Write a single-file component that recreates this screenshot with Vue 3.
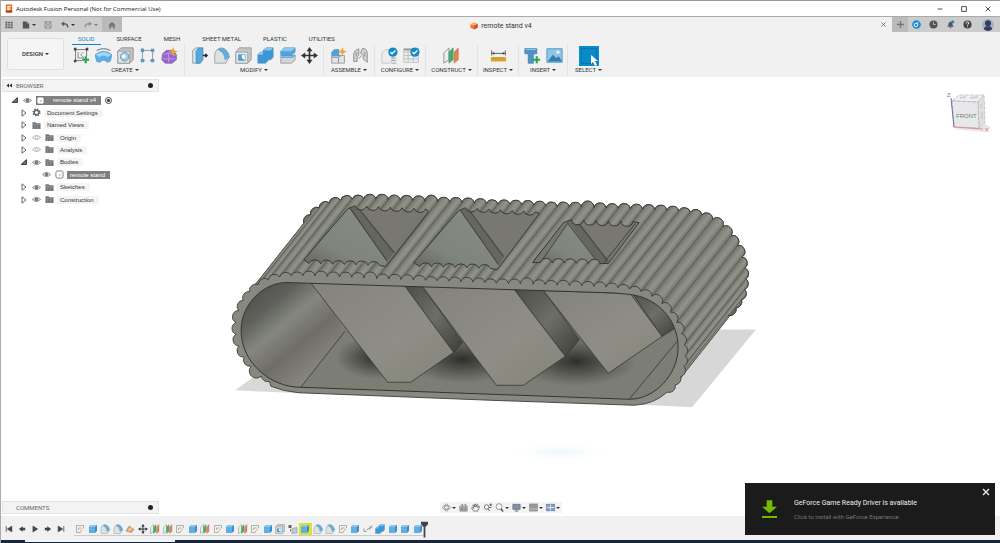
<script setup>
const tabs = ['SOLID', 'SURFACE', 'MESH', 'SHEET METAL', 'PLASTIC', 'UTILITIES']

const groups = [
  { name: 'CREATE', icons: ['sketch', 'revolve', 'hole', 'rect', 'form'] },
  { name: 'MODIFY', icons: ['presspull', 'fillet', 'shell', 'combine', 'split', 'move'] },
  { name: 'ASSEMBLE', icons: ['component', 'joint'] },
  { name: 'CONFIGURE', icons: ['config', 'table'] },
  { name: 'CONSTRUCT', icons: ['plane'] },
  { name: 'INSPECT', icons: ['measure'] },
  { name: 'INSERT', icons: ['bolt', 'image'] },
  { name: 'SELECT', icons: ['select'] }
]

const tree = [
  { label: 'remote stand v4', level: 'root', arrow: 'open', eye: 'eye', icon: 'body', selected: true, radio: true },
  { label: 'Document Settings', level: 'one', arrow: 'closed', icon: 'gear' },
  { label: 'Named Views', level: 'one', arrow: 'closed', icon: 'folder' },
  { label: 'Origin', level: 'one', arrow: 'closed', eye: 'eyeoff', icon: 'folder' },
  { label: 'Analysis', level: 'one', arrow: 'closed', eye: 'eyeoff', icon: 'folder' },
  { label: 'Bodies', level: 'one', arrow: 'open', eye: 'eye', icon: 'folder' },
  { label: 'remote stand', level: 'two', eye: 'eye', icon: 'body', selected: true },
  { label: 'Sketches', level: 'one', arrow: 'closed', eye: 'eye', icon: 'folder' },
  { label: 'Construction', level: 'one', arrow: 'closed', eye: 'eye', icon: 'folder' }
]

const playback = ['first', 'back', 'play', 'forward', 'last']

const features = [
  'tsketch', 'box', 'fillet', 'fillet', 'loft', 'move', 'plane', 'plane', 'tsketch', 'box',
  'plane', 'tsketch', 'box', 'plane', 'tsketch', 'box', 'shell', 'pattern', 'box', 'fillet',
  'fillet', 'tsketch', 'box', 'path', 'combine', 'box', 'box', 'box'
]
const activeFeature = 18

const navTools = [
  { icon: 'orbit', menu: true },
  { icon: 'look' },
  { icon: 'hand' },
  { icon: 'zoomfit' },
  { icon: 'zoom', menu: true },
  { icon: 'display', menu: true },
  { icon: 'grid', menu: true },
  { icon: 'views', menu: true }
]

// Crests of the ribs on the front face, clockwise from the lower left.
const crests = [
  [272, 386], [263, 384], [252, 373], [243, 364], [236.5, 353], [232, 341], [230, 328], [232, 315],
  [235.5, 303], [241.5, 292.5], [250, 284], [260, 277.3], [272, 273.3], [284.3, 271.6],
  [296, 271], [308, 271], [320.5, 271.6], [332.6, 272.2], [345, 272.7], [357, 273],
  [370, 274], [382, 274.3], [394.5, 274.7], [406.6, 275.3], [419, 275.7], [431, 276],
  [442.6, 276.6], [454.5, 276.7], [466.6, 277.3], [478.5, 277.7], [490.5, 278.3], [502, 279],
  [514, 279], [526.6, 279.7], [539, 280], [551, 280.3], [563.3, 281], [575.3, 281.3],
  [587.6, 281.6], [600, 282.3], [612, 283], [624, 283.6], [636, 285.3], [648, 289],
  [659.3, 295.6], [669.3, 304.3], [677.3, 314.3], [683, 326], [687, 338], [689, 349.5],
  [689, 361], [686.5, 372.5], [682, 383], [674, 391.5], [665, 398.5]
]
const depth = [61, -77]

const cusps = crests.slice(1).map((p, i) => {
  const q = crests[i]
  const mx = (p[0] + q[0]) / 2
  const my = (p[1] + q[1]) / 2
  const dx = p[0] - q[0]
  const dy = p[1] - q[1]
  const len = Math.hypot(dx, dy)
  return [mx - (dy / len) * 4, my + (dx / len) * 4]
})

const pt = p => p[0].toFixed(1) + ' ' + p[1].toFixed(1)
const shift = p => [p[0] + depth[0], p[1] + depth[1]]

const ribs = cusps.slice(1).map((b, i) => {
  const a = cusps[i]
  const n = [depth[1], -depth[0]]
  const k = ((b[0] - a[0]) * n[0] + (b[1] - a[1]) * n[1]) / (n[0] ** 2 + n[1] ** 2)
  return {
    id: 'rib' + i,
    a,
    g: [a[0] + n[0] * k, a[1] + n[1] * k],
    body: `M${pt(a)} L${pt(shift(a))} A6.3 6.3 0 0 1 ${pt(shift(b))} L${pt(b)}Z`,
    cap: `M${pt(shift(a))} A6.3 6.3 0 0 1 ${pt(shift(b))}`
  }
}).slice(8)

const face =
  'M' + pt(cusps[0]) +
  cusps.slice(1).map(c => ` A6.3 6.3 0 0 1 ${pt(c)}`).join('') +
  ' Q654 404 634 405 L490 400 L298 392.500 Q282 391 270 386Z'

// Row of equal arcs between two points.
function arcs(x1, y1, x2, y2, n, sweep) {
  let d = ''
  for (let i = 1; i <= n; i++) {
    d += ` A6.4 6.4 0 0 ${sweep} ${(x1 + ((x2 - x1) * i) / n).toFixed(1)} ${(y1 + ((y2 - y1) * i) / n).toFixed(1)}`
  }
  return d
}

const pockets = [
  {
    outline: `M303 259 L347 208 L354 205${arcs(354, 205, 425, 208, 6, 0)} L428 211 L385 266 L379 265${arcs(379, 265, 308, 263, 6, 0)}Z`,
    left: 'M303 259 L348 207 L386 261 L384 265 L308 263Z',
    bar: 'M348 207 L357 206 L394 251 L386 261Z',
    right: 'M357 206 L428 209 L394 251Z',
    line: 'M349 207 L386 260 M358 208 L393 252'
  },
  {
    outline: `M413 262 L458 210 L465 207${arcs(465, 207, 535, 211, 6, 0)} L539 213 L497 269 L490 268${arcs(490, 268, 419, 266, 6, 0)}Z`,
    left: 'M413 262 L459 209 L499 264 L494 269 L419 266Z',
    bar: 'M459 209 L468 208 L504 256 L498 265Z',
    right: 'M468 208 L540 211 L504 256Z',
    line: 'M460 210 L498 264 M469 210 L503 256'
  },
  {
    outline: `M532 262 L563 222 L571 219${arcs(571, 219, 633, 221, 5, 0)} L639 222 L608 263 L600 263${arcs(600, 263, 540, 262, 5, 0)}Z`,
    left: 'M539 262 L567 223 L600 264Z',
    bar: 'M567 219 L577 219 L610 262 L599 264Z',
    right: 'M577 219 L637 222 L606 258Z',
    line: 'M532 262 L563 221 M540 262 L568 222 M567 222 L599 264 M577 221 L607 260 M603 263 L635 223'
  }
]
</script>

<template>
  <div class="app">
    <svg class="sprite" aria-hidden="true">
      <symbol id="i-sketch" viewBox="0 0 20 20"><path d="M2 3H16M3 2V17M2 16H11M16 2V11" fill="none" stroke="#666" /><path d="M6 6V13H13L9 9L12 6" fill="none" stroke="#777" /><g fill="#444"><path d="M1 1h3v3H1zM15 1h3v3h-3zM1 15h3v3H1z" /></g><path d="M15 11v8M11 15h8" stroke="#28a34a" stroke-width="2.500" /></symbol>
      <symbol id="i-revolve" viewBox="0 0 20 20"><path d="M0 9Q10 1 20 9L18 17L14 18Q10 13 6 18L2 17Z" fill="#5aaee6" stroke="#5593bd" stroke-width=".7" /><path d="M1 9Q10 3 19 9L15 12Q10 8 5 12Z" fill="#a4d4f4" /><path d="M2 4Q10 0 18 4" fill="none" stroke="#555" /></symbol>
      <symbol id="i-hole" viewBox="0 0 20 20"><path d="M1 5L5 1H19V15L15 19H1Z" fill="#c2c5c7" stroke="#888" /><path d="M1 5H15V19H1Z" fill="#e5e6e7" stroke="#999" /><circle cx="9" cy="11.500" r="5" fill="#a0cce8" stroke="#5a8cab" /><circle cx="8" cy="11" r="2.500" fill="#eef7fc" /></symbol>
      <symbol id="i-rect" viewBox="0 0 20 20"><path d="M4 4H16V16H4ZM4 1V4" fill="none" stroke="#888" /><g fill="#5b98c6"><path d="M2 2h4v4H2zM14 2h4v4h-4zM14 14h4v4h-4zM2 14h4v4H2z" /></g><path d="M7 16h6" stroke="#f1f1f1" stroke-width="2" /></symbol>
      <symbol id="i-form" viewBox="0 0 20 20"><path d="M2 8L6 4H14L18 9V15L13 19H5L1 15Z" fill="#9766c8" stroke="#8760b3" /><path d="M3 9L9 7L9 18M9 7L17 10M2 14L17 14" fill="none" stroke="#c6a1e9" /><path d="M14 0L16 4L20 5L16 7L15 11L13 7L9 5L13 4Z" fill="#efa72b" /></symbol>
      <symbol id="i-presspull" viewBox="0 0 20 20"><path d="M2 4L6 1H9V19H2Z" fill="#d9e4ec" stroke="#8397a5" /><path d="M6 5L9 1H14V15L11 19H6Z" fill="#55a7df" stroke="#4b8bb5" /><path d="M14 10H19M17 8L19 10L17 12" fill="none" stroke="#222" stroke-width="1.500" /></symbol>
      <symbol id="i-fillet" viewBox="0 0 20 20"><path d="M2 19V9Q3 2 10 1Q18 3 19 12L15 19Z" fill="#dfe1e2" stroke="#989b9c" /><path d="M6 3Q12 -1 16 5Q19 8 19 12L14 15Q14 7 6 3" fill="#61aee0" stroke="#5a9ac5" stroke-width=".7" /></symbol>
      <symbol id="i-shell" viewBox="0 0 20 20"><path d="M1 6L5 1H19V15L15 19H1Z" fill="#c4c7c9" stroke="#939698" /><path d="M1 6H15V19H1Z" fill="#e9eaea" stroke="#999" /><path d="M4 9H12V16H4Z" fill="#fff" stroke="#76a7c6" /><path d="M4 9H8V13L12 16H4Z" fill="#4e9fd5" /></symbol>
      <symbol id="i-combine" viewBox="0 0 20 20"><path d="M7 4L11 1H19V12L16 15H13V16L10 19H1V9L4 6H7Z" fill="#3e96d6" stroke="#4288b9" stroke-width=".7" /><path d="M7 4L11 1H19L16 4ZM1 9L4 6H7V9Z" fill="#86c5ef" /></symbol>
      <symbol id="i-split" viewBox="0 0 20 20"><path d="M2 14L6 10H19V15L15 19H2Z" fill="#d3d6d8" stroke="#989b9c" /><path d="M2 5L6 1H19V6L15 10H2Z" fill="#4fa3dd" stroke="#4b8fbb" stroke-width=".7" /><path d="M2 5L6 1H19L15 5Z" fill="#8ac8ef" /><path d="M1 12H16L19 9" fill="none" stroke="#4b9fd8" stroke-width="1.500" /></symbol>
      <symbol id="i-move" viewBox="0 0 20 20"><path d="M10 3V17M3 10H17" stroke="#333" stroke-width="2" /><path d="M10 0L13.500 5H6.500ZM10 20L13.500 15H6.500ZM0 10L5 6.500V13.500ZM20 10L15 6.500V13.500Z" fill="#333" /></symbol>
      <symbol id="i-component" viewBox="0 0 20 20"><path d="M2 6L5 3H10V10H17V19H2Z" fill="#e0e2e4" stroke="#939698" /><path d="M2 6L5 3H11V11H2Z" fill="#559fd5" /><path d="M2 12H10V19M10 12L13 10" fill="none" stroke="#81878b" /><path d="M15 0L16 4L20 5L16 7L15 10L13 7L10 5L13 4Z" fill="#efa72b" /></symbol>
      <symbol id="i-joint" viewBox="0 0 20 20"><path d="M2 17V8Q3 3 8 2V10L6 12V17ZM12 2Q17 1 18 7V18L13 14V10L10 7Z" fill="#cfd1d2" stroke="#888" /><path d="M5 6v5M15 6v5M8 14L11 10" stroke="#888" /></symbol>
      <symbol id="i-config" viewBox="0 0 20 20"><path d="M1 19V7L6 3H14V15L10 19Z" fill="#ececec" stroke="#c4c4c4" /><path d="M12 13h6M12 16h6M12 19h6" stroke="#999" /><circle cx="14" cy="6" r="5.500" fill="#138ac5" /><path d="M11 6L13 8L17 4" stroke="#fff" stroke-width="1.500" fill="none" /></symbol>
      <symbol id="i-table" viewBox="0 0 20 20"><path d="M1 2H18V18H1ZM1 6H18M1 10H18M1 14H18M6 2V18M12 2V18" fill="#eee" stroke="#bbb" /><path d="M1 3H10" stroke="#999" stroke-width="2" /><circle cx="14" cy="6" r="5.500" fill="#138ac5" /><path d="M11 6L13 8L17 4" stroke="#fff" stroke-width="1.500" fill="none" /></symbol>
      <symbol id="i-plane" viewBox="0 0 20 20"><path d="M1 7L7 1V15L1 19Z" fill="#ececec" stroke="#888" /><path d="M7 6L12 1V15L7 19Z" fill="#48aa70" stroke="#4a9c6d" stroke-width=".7" /><path d="M13 6L18 1V15L13 19Z" fill="#de8256" stroke="#c97b57" stroke-width=".7" /></symbol>
      <symbol id="i-measure" viewBox="0 0 20 20"><path d="M2 4V10M18 4V10M3 7.500H17" stroke="#444" /><path d="M2 7.500L5 6V9ZM18 7.500L15 6V9Z" fill="#444" /><path d="M1 12H19V17H1Z" fill="#d9a528" /><path d="M4 12v2M7 12v2M10 12v2M13 12v2M16 12v2" stroke="#a98628" /></symbol>
      <symbol id="i-bolt" viewBox="0 0 20 20"><path d="M1 2H15V8H11V19H5V8H1Z" fill="#4c92c7" stroke="#4a83ae" /><path d="M2 3H14" stroke="#9bccea" /><path d="M15 11v8M11 15h8" stroke="#28a34a" stroke-width="2.500" /></symbol>
      <symbol id="i-image" viewBox="0 0 20 20"><path d="M1 2H19V18H1Z" fill="#8ec6ea" stroke="#5393be" /><path d="M2 17L8 9L12 13L15 11L19 17Z" fill="#347db2" /><circle cx="14" cy="6" r="2" fill="#e7f5fc" /></symbol>
      <symbol id="i-select" viewBox="0 0 20 20"><path d="M0 0H20V20H0Z" fill="#078bcb" /><path d="M2.500 2.500H17.500V17.500H2.500Z" fill="none" stroke="#14567d" stroke-dasharray="2 1" stroke-width=".7" /><path d="M12 9V18L14 16L16 20L18 19L16 15H19Z" fill="#fff" /></symbol>
      <symbol id="i-box" viewBox="0 0 20 20"><path d="M2 6L6 2H18V14L14 18H2Z" fill="#3d8dcc" /><path d="M2 6L6 2H18L14 6Z" fill="#8bc6ef" /><path d="M2 6H14V18H2Z" fill="#61aee2" /></symbol>
      <symbol id="i-tsketch" viewBox="0 0 20 20"><path d="M3 3H17M3 3V17H11M7 12V8H13M17 3V8" fill="none" stroke="#999" stroke-width="1.500" /><path d="M10 16L16 9" stroke="#e0ad79" stroke-width="2" /></symbol>
      <symbol id="i-loft" viewBox="0 0 20 20"><path d="M2 14L8 4L18 11L13 17Z" fill="#dfa868" stroke="#9d7b51" /><path d="M7 13L13 8" stroke="#fff" stroke-width="2" /></symbol>
      <symbol id="i-pattern" viewBox="0 0 20 20"><path d="M1 2h6v6H1z" fill="#666" /><path d="M8 9L18 7V18L8 19Z" fill="#b9cbd7" stroke="#728592" /><path d="M5 10v5" stroke="#bd6553" stroke-width="2" /></symbol>
      <symbol id="i-path" viewBox="0 0 20 20"><path d="M2 9V15H7M7 12L17 6M14 5V11" fill="none" stroke="#999" stroke-width="2" /><circle cx="17" cy="5" r="2" fill="#aaa" /></symbol>
      <symbol id="i-eye" viewBox="0 0 20 20"><path d="M1 10Q10 1 19 10Q10 19 1 10Z" fill="#eee" stroke="#777" stroke-width="1.800" /><circle cx="10" cy="10" r="4" fill="#777" /></symbol>
      <symbol id="i-eyeoff" viewBox="0 0 20 20"><path d="M1 10Q10 1 19 10Q10 19 1 10Z" fill="#fafafa" stroke="#999" stroke-width="1.500" /><circle cx="10" cy="10" r="3" fill="none" stroke="#999" /></symbol>
      <symbol id="i-folder" viewBox="0 0 20 20"><path d="M1 3H8L10 5H19V18H1Z" fill="#777" /><path d="M1 8H19M6 9V18M12 9V18" stroke="#aaa" /></symbol>
      <symbol id="i-gear" viewBox="0 0 20 20"><circle cx="10" cy="10" r="7" fill="none" stroke="#666" stroke-width="4" stroke-dasharray="3 2.500" /><circle cx="10" cy="10" r="5" fill="none" stroke="#666" stroke-width="3" /></symbol>
      <symbol id="i-body" viewBox="0 0 20 20"><rect x="2" y="2" width="16" height="16" rx="4" fill="#fff" stroke="#666" stroke-width="1.800" /><circle cx="11" cy="11" r="2" fill="#bbb" /></symbol>
      <symbol id="i-open" viewBox="0 0 20 20"><path d="M3 16L16 4V16Z" fill="#777" stroke="#333" stroke-width="2.500" /></symbol>
      <symbol id="i-closed" viewBox="0 0 20 20"><path d="M5 2L15 10L5 18Z" fill="#fff" stroke="#444" stroke-width="2" /></symbol>
      <symbol id="i-first" viewBox="0 0 20 20"><path d="M3 3V17M17 3L6 10L17 17Z" fill="#444" stroke="#444" stroke-width="2" /></symbol>
      <symbol id="i-back" viewBox="0 0 20 20"><path d="M12 3L2 10L12 17ZM12 7H18V13H12Z" fill="#444" /></symbol>
      <symbol id="i-play" viewBox="0 0 20 20"><path d="M4 1L18 10L4 19Z" fill="#444" /></symbol>
      <symbol id="i-forward" viewBox="0 0 20 20"><path d="M8 3L18 10L8 17ZM2 7H8V13H2Z" fill="#444" /></symbol>
      <symbol id="i-last" viewBox="0 0 20 20"><path d="M17 3V17M3 3L14 10L3 17Z" fill="#444" stroke="#444" stroke-width="2" /></symbol>
      <symbol id="i-orbit" viewBox="0 0 20 20"><ellipse cx="10" cy="10" rx="9" ry="4" fill="none" stroke="#777" stroke-width="1.500" /><ellipse cx="10" cy="10" rx="4" ry="8" fill="none" stroke="#777" stroke-width="1.500" /></symbol>
      <symbol id="i-look" viewBox="0 0 20 20"><path d="M2 7H18V18H2ZM5 3H8V7M12 3H15V7" fill="#ccc" stroke="#666" stroke-width="1.500" /><path d="M5 11H15V15H5Z" fill="none" stroke="#555" stroke-width="1.500" /></symbol>
      <symbol id="i-hand" viewBox="0 0 20 20"><path d="M6 18L1 11Q2 8 6 12L4 5L6 4L8 9V3L10 2L11 9L13 3L15 4V10L17 7L19 8L15 18Z" fill="#eee" stroke="#555" stroke-width="1.500" /></symbol>
      <symbol id="i-zoomfit" viewBox="0 0 20 20"><circle cx="8" cy="9" r="5" fill="#fff" stroke="#666" stroke-width="2" /><path d="M11 13L15 18M14 4H20M17 1V7M14 10H19" stroke="#555" stroke-width="2" /></symbol>
      <symbol id="i-zoom" viewBox="0 0 20 20"><circle cx="9" cy="8" r="6.500" fill="#fff" stroke="#666" stroke-width="1.500" /><path d="M13 13L18 19" stroke="#444" stroke-width="3" /></symbol>
      <symbol id="i-display" viewBox="0 0 20 20"><path d="M2 3H18V14H2Z" fill="#7c91b8" stroke="#777" stroke-width="2" /><path d="M6 18H14M10 14V18" stroke="#777" stroke-width="2" /></symbol>
      <symbol id="i-grid" viewBox="0 0 20 20"><path d="M1 2H19V18H1Z" fill="#999" stroke="#777" /><path d="M1 12H19M1 15H19" stroke="#ccc" /></symbol>
      <symbol id="i-views" viewBox="0 0 20 20"><path d="M1 3H19V17H1Z" fill="#8aa0cc" stroke="#536a99" stroke-width="1.500" /><path d="M10 3V17M1 10H19" stroke="#fff" stroke-width="1.500" /></symbol>
    </svg>

    <header class="titlebar">
      <svg class="logo" viewBox="0 0 20 20"><rect x="2" width="16" height="20" rx="2" fill="#e86c1d" /><path d="M6 4H15V7H9V10H14V13H9V17H6Z" fill="#fff" /><path d="M2 15H18V20H2Z" fill="#a83d0d" /></svg>
      <h1>Autodesk Fusion Personal (Not for Commercial Use)</h1>
      <div class="window-buttons">
        <button aria-label="Minimize"><svg viewBox="0 0 10 10"><path d="M2 5H8" stroke="#222" /></svg></button>
        <button aria-label="Maximize"><svg viewBox="0 0 10 10"><path d="M2 2H8V8H2Z" fill="none" stroke="#222" /></svg></button>
        <button aria-label="Close"><svg viewBox="0 0 10 10"><path d="M2 2L8 8M8 2L2 8" stroke="#222" /></svg></button>
      </div>
    </header>

    <nav class="tabbar">
      <div class="quick">
        <button aria-label="Data panel"><svg viewBox="0 0 20 20"><path d="M1 2h5v4H1zM8 2h4v4H8zM14 2h5v4h-5zM1 8h5v4H1zM8 8h4v4H8zM14 8h5v4h-5zM1 14h5v4H1zM8 14h4v4H8zM14 14h5v4h-5z" fill="#555" /></svg></button>
        <button class="wide" aria-label="File"><svg viewBox="0 0 20 20"><path d="M2 1H12L18 6V19H2Z" fill="#555" /><path d="M12 1V6H18" fill="#aaa" /></svg><i class="caret" /></button>
        <button aria-label="Save"><svg viewBox="0 0 20 20"><path d="M2 2H18V18H2ZM6 2V8H14V2M5 18V12H15V18" fill="none" stroke="#888" stroke-width="2" /></svg></button>
        <button class="wide" aria-label="Undo"><svg viewBox="0 0 20 20"><path d="M5 7H11Q17 8 17 16" fill="none" stroke="#555" stroke-width="3" /><path d="M0 7L8 1V13Z" fill="#555" /></svg><i class="caret" /></button>
        <button class="wide faded" aria-label="Redo"><svg viewBox="0 0 20 20"><path d="M15 7H9Q3 8 3 16" fill="none" stroke="#555" stroke-width="3" /><path d="M20 7L12 1V13Z" fill="#555" /></svg><i class="caret" /></button>
        <button class="home" aria-label="Home"><svg viewBox="0 0 20 20"><path d="M1 10L10 2L19 10L17 12V19H12V13H8V19H3V12Z" fill="#777" /></svg></button>
      </div>
      <div class="document">
        <svg viewBox="0 0 20 20"><path d="M1 6L9 1L19 5V14L11 19L1 15Z" fill="#ef7c35" /><path d="M1 6L9 1L19 5L11 9Z" fill="#ffb17b" /><path d="M11 9L19 5V14L11 19Z" fill="#ca5319" /></svg>
        <span>remote stand v4</span>
      </div>
      <button class="close-tab" aria-label="Close document"><svg viewBox="0 0 10 10"><path d="M2 2L8 8M8 2L2 8" stroke="#555" /></svg></button>
      <div class="account">
        <button class="add" aria-label="New design"><svg viewBox="0 0 20 20"><path d="M10 2V18M2 10H18" stroke="#777" stroke-width="3" /></svg></button>
        <button aria-label="Extensions"><svg viewBox="0 0 20 20"><circle cx="10" cy="10" r="9.500" fill="#168dcc" /><circle cx="9" cy="11" r="4" fill="none" stroke="#fff" stroke-width="2" /><path d="M10 9L15 4" stroke="#fff" stroke-width="2" /></svg></button>
        <button aria-label="Job status"><svg viewBox="0 0 20 20"><circle cx="10" cy="10" r="9" fill="#555" /><path d="M10 4V10H15" fill="none" stroke="#bbb" stroke-width="2" /></svg></button>
        <button aria-label="Notifications"><svg viewBox="0 0 20 20"><path d="M3 15Q6 12 6 7Q10 0 14 7Q14 12 17 15ZM7 16H13L10 19Z" fill="#555" /><circle cx="15" cy="4" r="3.500" fill="#168dcc" /></svg></button>
        <button aria-label="Help"><svg viewBox="0 0 20 20"><circle cx="10" cy="10" r="9" fill="#444" /><path d="M7 8Q7 4 10 4Q15 5 12 9Q10 10 10 12M10 14V16" fill="none" stroke="#fff" stroke-width="2" /></svg></button>
        <button class="avatar" aria-label="Profile"><svg viewBox="0 0 20 20"><circle cx="10" cy="10" r="10" fill="#a7b0c8" /><circle cx="10" cy="7" r="5" fill="#333d5c" /><path d="M3 17Q4 12 8 12H12Q16 12 17 17Q10 23 3 17" fill="#333d5c" /></svg></button>
      </div>
    </nav>

    <section class="ribbon">
      <button class="workspace">DESIGN<i class="caret" /></button>
      <div class="ribbon-body">
        <div class="tabs">
          <button v-for="(t, i) in tabs" :key="t" :class="{ active: i === 0 }">{{ t }}</button>
        </div>
        <div class="groups">
          <div v-for="g in groups" :key="g.name" class="group">
            <div class="tools">
              <button v-for="ic in g.icons" :key="ic" :aria-label="ic"><svg><use :href="'#i-' + ic" /></svg></button>
            </div>
            <button class="group-name">{{ g.name }}<i class="caret" /></button>
          </div>
        </div>
      </div>
    </section>

    <main class="stage">
      <svg class="model" viewBox="0 76 1000 440" role="img" aria-label="remote stand">
        <defs>
          <linearGradient v-for="r in ribs" :id="r.id" :key="r.id" gradientUnits="userSpaceOnUse" :x1="r.a[0]" :y1="r.a[1]" :x2="r.g[0]" :y2="r.g[1]">
            <stop offset="0" stop-color="#6f7069" />
            <stop offset=".3" stop-color="#85867e" />
            <stop offset=".6" stop-color="#92938b" />
            <stop offset="1" stop-color="#74756d" />
          </linearGradient>
          <linearGradient id="bore" gradientUnits="userSpaceOnUse" x1="252" y1="295" x2="318" y2="375">
            <stop offset="0" stop-color="#53544f" /><stop offset=".18" stop-color="#5f605b" /><stop offset=".4" stop-color="#848780" /><stop offset=".65" stop-color="#706d66" /><stop offset="1" stop-color="#8a8a82" />
          </linearGradient>
          <linearGradient id="slab" x1="0" y1="0" x2="1" y2="1"><stop offset="0" stop-color="#83837b" /><stop offset=".6" stop-color="#8f8e86" /><stop offset="1" stop-color="#82837a" /></linearGradient>
          <linearGradient id="side" x1="0" y1="0" x2="1" y2="1"><stop offset="0" stop-color="#4a4b46" /><stop offset=".5" stop-color="#6d6e67" /><stop offset="1" stop-color="#3c3d38" /></linearGradient>
          <linearGradient id="pocket" x1="0" y1="1" x2=".8" y2="0"><stop offset="0" stop-color="#62655f" /><stop offset=".35" stop-color="#7f847d" /><stop offset="1" stop-color="#868b84" /></linearGradient>
          <radialGradient id="dark"><stop offset="0" stop-color="#252622" stop-opacity=".9" /><stop offset="1" stop-color="#30312d" stop-opacity="0" /></radialGradient>
          <radialGradient id="haze"><stop offset="0" stop-color="#e4eff5" stop-opacity=".6" /><stop offset="1" stop-color="#eef6fa" stop-opacity="0" /></radialGradient>
          <clipPath id="opening"><path d="M286 282 C262 282 240 304 240 330 C240 361 268 387 300 387 L629 399 C655 399 678 374 678 347 C678 318 656 297 630 294 Q615 292 600 292Z" /></clipPath>
        </defs>
        <ellipse cx="560" cy="452" rx="48" ry="8" fill="url(#haze)" />
        <path d="M234 390L256 374L300 393Z" fill="#d9d9d8" />
        <path d="M690 329H756L692 407L630 404Z" fill="#d7d7d8" />
        <g stroke="#54554e" stroke-width=".7">
          <path v-for="r in ribs" :key="r.id" :d="r.body" :fill="`url(#${r.id})`" />
        </g>
        <path v-for="r in ribs" :key="r.id" :d="r.cap" fill="none" stroke="#383933" stroke-width=".9" />
        <g v-for="(p, i) in pockets" :key="i" stroke-linejoin="round">
          <path :d="p.outline" fill="#74766f" />
          <clipPath :id="'pocket' + i"><path :d="p.outline" /></clipPath>
          <g :clip-path="`url(#pocket${i})`">
            <path :d="p.right" fill="#787770" />
            <path :d="p.left" fill="url(#pocket)" />
            <path :d="p.bar" fill="#65665f" />
            <path :d="p.line" fill="none" stroke="#343530" stroke-width=".8" />
          </g>
          <path :d="p.outline" fill="none" stroke="#30312d" stroke-width=".9" />
        </g>
        <path :d="face" fill="#878880" stroke="#3b3c37" stroke-width=".9" stroke-linejoin="round" />
        <g clip-path="url(#opening)">
          <path d="M230 270H700V410H230Z" fill="#7c7d75" />
          <path d="M230 270H308L344 331L299 388H230Z" fill="url(#bore)" />
          <ellipse cx="375" cy="357" rx="40" ry="22" fill="url(#dark)" />
          <ellipse cx="462" cy="359" rx="58" ry="24" fill="url(#dark)" />
          <ellipse cx="576" cy="361" rx="60" ry="25" fill="url(#dark)" />
          <g stroke="#363732" stroke-width=".8" stroke-linejoin="round">
            <path d="M344 331L299 388" />
            <path d="M403 284L421 285L462 342L453 352Z" fill="url(#side)" />
            <path d="M308 280L403 284L453 352L410 382H387Z" fill="url(#slab)" />
            <path d="M513 288L543 290L579 339L565 356Z" fill="url(#side)" />
            <path d="M421 285L513 288L565 356L523 385H496Z" fill="url(#slab)" />
            <path d="M630 290L680 300L678 326L662 336Z" fill="url(#side)" />
            <path d="M543 290L630 293L662 336L608 373Z" fill="url(#slab)" />
            <path d="M629 399L677 341" fill="none" />
          </g>
        </g>
        <path d="M286 282 C262 282 240 304 240 330 C240 361 268 387 300 387 L629 399 C655 399 678 374 678 347 C678 318 656 297 630 294 Q615 292 600 292Z" fill="none" stroke="#343530" />
      </svg>

      <aside class="side">
        <div class="panel-head"><svg class="rewind" viewBox="0 0 12 10"><path d="M6 1L1 5L6 9ZM12 1L7 5L12 9Z" fill="#222" /></svg><span>BROWSER</span><button aria-label="Collapse browser"><i /></button></div>
        <ul class="tree">
          <li v-for="row in tree" :key="row.label" :class="[row.level, { selected: row.selected }]">
            <svg v-if="row.arrow" class="arrow"><use :href="'#i-' + row.arrow" /></svg>
            <svg v-if="row.eye"><use :href="'#i-' + row.eye" /></svg>
            <span class="entry"><svg><use :href="'#i-' + row.icon" /></svg><span class="label">{{ row.label }}</span></span>
            <i v-if="row.radio" class="radio" />
          </li>
        </ul>
        <div class="panel-head comments"><span>COMMENTS</span><button aria-label="Add comment"><i /></button></div>
      </aside>

      <svg class="cube" viewBox="0 0 48 48">
        <path d="M7 40L38 43L45 38L38 35Z" fill="#e8e5e5" />
        <path d="M6 12L13 6H38L32 13Z" fill="#f1f1f2" stroke="#ccc" stroke-dasharray="4 1" />
        <path d="M32 13L38 6L39 34L33 39Z" fill="#e0e0e2" stroke="#c8c8ca" stroke-dasharray="4 1" />
        <path d="M6 12L32 13L33 39L8 38Z" fill="#e7e8ea" stroke="#bbb" stroke-dasharray="4 1" />
        <path d="M5 9L8 38" stroke="#6969b5" /><path d="M8 38L37 40" stroke="#d99090" />
        <path d="M14 9L20 8M24 9L32 8M35 15V19M36 23V30" stroke="#cfd1d5" stroke-width="2" />
        <text x="10" y="29" class="front">FRONT</text><text x="1" y="8" class="z">Z</text><text x="39" y="43" class="x">X</text>
      </svg>

      <div class="navbar">
        <button v-for="n in navTools" :key="n.icon" :aria-label="n.icon"><svg><use :href="'#i-' + n.icon" /></svg><i v-if="n.menu" class="caret" /></button>
      </div>
    </main>

    <section class="timeline">
      <div class="playback">
        <button v-for="p in playback" :key="p" :aria-label="p"><svg><use :href="'#i-' + p" /></svg></button>
      </div>
      <div class="features">
        <button v-for="(f, i) in features" :key="i" :class="{ on: i === activeFeature }" :aria-label="f"><svg><use :href="'#i-' + f" /></svg></button>
      </div>
      <svg class="marker" viewBox="0 0 8 18"><path d="M0 0H8V3L5 6V18H3V6L0 3Z" fill="#444" /></svg>
    </section>
    <footer class="taskbar"><span /></footer>

    <aside class="toast">
      <svg viewBox="0 0 16 20"><path d="M5 0H11V7H16L8 14L0 7H5ZM0 17H16V19H0Z" fill="#76b900" /></svg>
      <div><strong>GeForce Game Ready Driver is available</strong><p>Click to install with GeForce Experience.</p></div>
      <button aria-label="Dismiss"><svg viewBox="0 0 10 10"><path d="M2 2L8 8M8 2L2 8" stroke="#ddd" stroke-width="1.500" /></svg></button>
    </aside>
  </div>
</template>

<style>
html, body { background: #fff; overflow: hidden; }
</style>

<style scoped>
* { box-sizing: border-box; }
.app { position: relative; height: 100vh; display: flex; flex-direction: column; overflow: hidden; font: 6px/8px Roboto, "Liberation Sans", sans-serif; color: #333; background: #fff; border-left: 1px solid #aaa; }
button { border: 0; padding: 0; margin: 0; background: none; font: inherit; color: inherit; display: flex; align-items: center; justify-content: center; }
svg { display: block; flex: none; }
.sprite { position: absolute; width: 0; height: 0; }
.caret { flex: none; width: 0; height: 0; margin-left: 2px; border: 2px solid transparent; border-top: 2px solid #333; border-bottom: 0; }

.titlebar { height: 17px; flex: none; display: flex; align-items: center; gap: 3px; padding-left: 4px; border-top: 1px solid #999; border-bottom: 1px solid #aaa; }
.logo { width: 8px; height: 9px; }
h1 { margin: 0; flex: 1; font: 6px/8px "Open Sans", sans-serif; color: #111; }
.window-buttons { display: flex; }
.window-buttons button { width: 24px; height: 14px; }
.window-buttons svg { width: 8px; height: 8px; }

.tabbar { height: 15px; flex: none; display: flex; align-items: stretch; background: #f1f1f1; }
.quick { display: flex; background: #ccc; }
.quick button { width: 16px; }
.quick .wide { width: 23px; }
.quick .home { width: 20px; background: #bababa; }
.quick .faded { opacity: .5; }
.quick svg { width: 8px; height: 8px; }
.document { flex: 1; display: flex; align-items: center; justify-content: center; gap: 3px; padding: 2px 0 0 6px; font-size: 7px; }
.document svg { width: 8px; height: 8px; }
.close-tab { width: 18px; }
.close-tab svg { width: 7px; height: 7px; }
.account { display: flex; background: #ccc; }
.account button { width: 17px; }
.account .add { background: #bbb; width: 16px; }
.account svg { width: 9px; height: 9px; }
.account .avatar { width: 24px; }
.avatar svg { width: 12px; height: 12px; }

.ribbon { height: 45px; flex: none; display: flex; background: #f1f1f1; }
.workspace { width: 57px; height: 32px; margin: 6px 2px 0 6px; border: 1px solid #e0e0e0; border-radius: 2px; background: #f5f5f5; font-weight: 500; }
.ribbon-body { flex: 1; }
.tabs { display: flex; gap: 22px; height: 13px; padding-left: 12px; }
.tabs button { padding: 3px 0 1px; border-bottom: 1px solid transparent; }
.tabs .active { color: #0a86c4; border-color: #0a86c4; padding-inline: 6px; margin-inline: -6px; }
.groups { display: grid; grid-template-columns: 118px 139px 51px 51px 52px 41px 49px 42px; }
.group { height: 31px; }
.group + .group { border-left: 1px solid #e2e2e2; }
.tools { display: flex; justify-content: center; height: 21px; }
.tools button { width: 22px; }
.tools svg { width: 17px; height: 17px; }
.group:last-child svg { width: 20px; height: 20px; }
.group-name { width: 100%; height: 8px; }

.stage { flex: 1; min-height: 0; position: relative; display: flex; }
.model { position: absolute; inset: 0; width: 100%; height: 100%; }
.side { position: relative; width: 158px; display: flex; flex-direction: column; padding-top: 2px; }
.panel-head { height: 13px; flex: none; display: flex; align-items: center; gap: 4px; padding: 0 5px 0 3px; margin-left: 1px; background: #f3f3f3; border: 1px solid #e3e3e3; color: #666; }
.panel-head button { margin-left: auto; }
.panel-head button i { width: 5px; height: 5px; border-radius: 50%; background: #222; }
.rewind { width: 6px; height: 5px; }
.comments { margin-top: auto; margin-bottom: 2px; padding-left: 13px; }
.tree { list-style: none; margin: 2px 0 0; padding: 0; height: 112px; display: flex; flex-direction: column; }
.tree li { flex: 1; display: flex; align-items: center; gap: 4px; font: 6px/8px "Liberation Sans", sans-serif; }
.tree svg { width: 9px; height: 9px; }
.tree .arrow { width: 8px; height: 8px; }
.root { padding-left: 10px; }
.one { padding-left: 19px; }
.two { padding-left: 41px; }
.entry { display: flex; align-items: center; gap: 3px; }
.label { padding: 0 5px 0 3px; background: #f4f4f4; }
.selected .label { background: #808080; color: #fff; }
.root .entry { background: #808080; }
.root .label { padding: 0 5px; }
.radio { width: 7px; height: 7px; border: 1px solid #444; border-radius: 50%; background: radial-gradient(#333 0 1px, #fff 2px); }

.cube { position: absolute; right: 6px; top: 12px; width: 48px; height: 48px; }
.cube text { font: 6px "Liberation Sans", sans-serif; }
.cube .front { fill: #777; }
.cube .z { fill: #777799; }
.cube .x { fill: #e06464; }
.navbar { position: absolute; left: 50%; bottom: 3px; transform: translateX(-50%); display: flex; gap: 3px; padding: 1px 2px; background: #f3f3f3; }
.navbar svg { width: 9px; height: 9px; }
.navbar .caret { margin-left: 1px; }

.timeline { height: 24px; flex: none; display: flex; align-items: flex-start; background: #f1f1f1; }
.playback { display: flex; gap: 3px; padding: 8px 0 0 3px; }
.playback button { width: 10px; height: 10px; }
.playback svg { width: 8px; height: 8px; }
.features { display: flex; width: 350px; height: 20px; margin-left: 8px; padding-top: 7px; }
.features button { flex: 1; height: 13px; border-bottom: 1px solid #ccc; }
.features svg { width: 10px; height: 10px; }
.features .on { background: #d9e430; }
.marker { width: 7px; height: 17px; margin: 5px 0 0 -3px; }
.taskbar { height: 3px; flex: none; background: #18263a; padding-left: 24px; }
.taskbar span { display: block; width: 150px; height: 2px; background: #f2f5f7; }

.toast { position: absolute; right: 5px; bottom: 8px; width: 250px; height: 52px; display: flex; align-items: center; padding-left: 17px; background: #1b1b1b; color: #eee; }
.toast > svg { width: 15px; height: 19px; }
.toast div { margin-left: 17px; padding-top: 2px; }
.toast strong { display: block; font: 7px/9px Roboto, sans-serif; }
.toast p { margin: 5px 0 0; font: 6px/8px Roboto, sans-serif; color: #777; }
.toast button { position: absolute; right: 4px; top: 4px; }
.toast button svg { width: 10px; height: 10px; }
</style>
